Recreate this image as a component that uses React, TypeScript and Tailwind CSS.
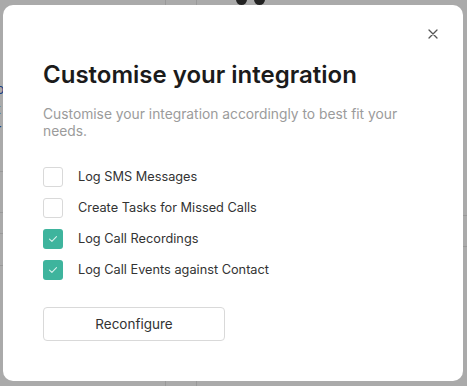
import React from "react";

const items = [
  { label: "Log SMS Messages", checked: false },
  { label: "Create Tasks for Missed Calls", checked: false },
  { label: "Log Call Recordings", checked: true },
  { label: "Log Call Events against Contact", checked: true },
];

function Check({ checked }: { checked: boolean }) {
  return checked ? (
    <div className="w-[20px] h-[20px] shrink-0 rounded-[3px] bg-[#3eb49d] flex items-center justify-center">
      <svg width="10" height="8" viewBox="0 0 10 8" fill="none">
        <path d="M1.5 4.2 L3.9 6.4 L8.5 1.6" stroke="#d8f1ec" strokeWidth="1.1" strokeLinecap="round" strokeLinejoin="round" />
      </svg>
    </div>
  ) : (
    <div className="w-[20px] h-[20px] shrink-0 rounded-[3px] border border-[#d9d9d9] bg-white" />
  );
}

function Backdrop() {
  return (
    <div className="absolute inset-0 flex">
      <div className="w-[165px] flex flex-col">
        <div className="pt-[79px] text-[14px] leading-[20px] text-[#1c3f80] -ml-[4px]">
          <div>o</div>
          <div>t</div>
          <div>r</div>
        </div>
        <div className="mt-[32px] flex flex-col">
          <div className="w-[5px] h-px bg-[#999]" />
          <div className="mt-[40px] w-[5px] h-px bg-[#999]" />
          <div className="mt-[20px] w-[5px] h-px bg-[#999]" />
          <div className="mt-[31px] w-[5px] h-px bg-[#999]" />
        </div>
        <div className="mt-auto mb-[8px] -ml-[3px] text-[14px] leading-[16px] text-[#222]">l</div>
      </div>
      <div className="w-px bg-[#999]" />
      <div className="w-[30px]" />
      <div className="w-px bg-[#999]" />
      <div className="flex-1 flex flex-col">
        <div className="flex gap-[7px] ml-[39px] -mt-[6px]">
          <div className="w-[11px] h-[11px] rounded-full bg-[#222]" />
          <div className="w-[11px] h-[11px] rounded-full bg-[#222]" />
        </div>
        <div className="mt-[210px] self-end w-[5px] h-px bg-[#999]" />
        <div className="mt-[30px] self-end w-[5px] h-px bg-[#999]" />
      </div>
    </div>
  );
}

export default function App() {
  return (
    <div
      className="relative w-[467px] h-[386px] overflow-hidden bg-[#aaaaaa] pt-[5px] pl-[3px]"
      style={{ fontFamily: "Inter, 'Noto Sans', sans-serif" }}
    >
      <Backdrop />
      <div className="relative w-[460px] h-[376px] bg-white rounded-[10px] flex flex-col">
        <div className="flex justify-end pt-[24px] pr-[25px]">
          <svg width="10" height="10" viewBox="0 0 10 10">
            <path d="M1 1 L9 9 M9 1 L1 9" stroke="#555" strokeWidth="1.3" strokeLinecap="round" />
          </svg>
        </div>
        <div className="px-[40px] flex flex-col items-start">
          <h1 className="mt-[21px] text-[24px] leading-[30px] font-semibold text-[#1b1b1b]">
            Customise your integration
          </h1>
          <p className="mt-[16px] text-[13.8px] leading-[17px] text-[#9b9b9b] w-[370px]">
            Customise your integration accordingly to best fit your needs.
          </p>
          <div className="mt-[27px] flex flex-col gap-[11px]">
            {items.map((it) => (
              <div key={it.label} className="flex items-center gap-[15px]">
                <Check checked={it.checked} />
                <span className="text-[12.75px] text-[#333]">{it.label}</span>
              </div>
            ))}
          </div>
          <button className="mt-[27px] w-[182px] h-[34px] rounded-[4px] border border-[#d9d9d9] bg-white text-[13.5px] text-[#333]">
            Reconfigure
          </button>
        </div>
      </div>
    </div>
  );
}
